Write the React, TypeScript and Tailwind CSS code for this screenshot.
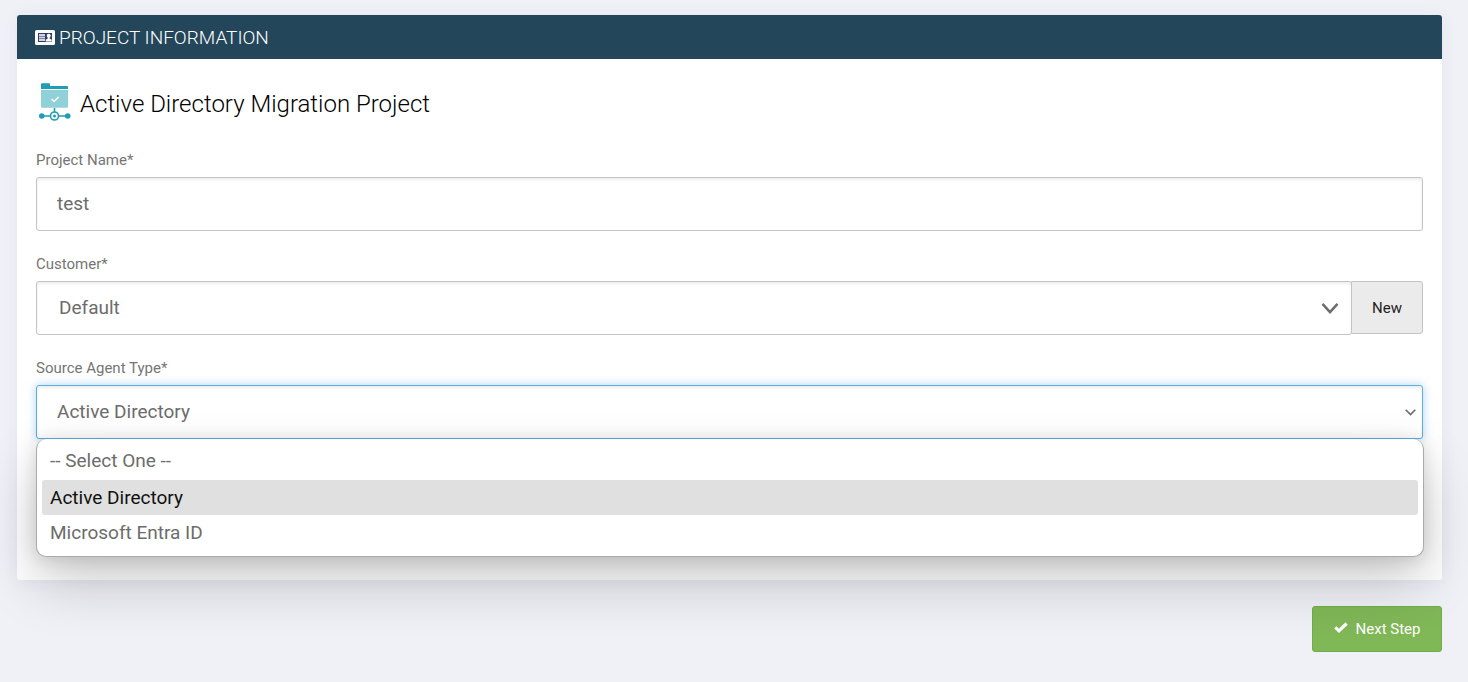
import { useState } from "react";

const agentTypes = ["-- Select One --", "Active Directory", "Microsoft Entra ID"];

const fieldBox =
  "block h-[54px] w-full appearance-none rounded-[3px] border border-[#c4c4c4] bg-white text-[19px] text-[#6c6c6c] shadow-[inset_0_2px_3px_rgba(0,0,0,0.07)] outline-none";

const fieldLabel = "block h-7 pt-px text-[15px] leading-5 text-[#757575]";

function IdCardIcon() {
  return (
    <svg width="20" height="15" viewBox="0 0 20 15" aria-hidden="true">
      <rect width="20" height="15" rx="1.6" fill="#fff" />
      <rect x="3" y="3" width="14" height="9" fill="#2f3f6b" />
      <path d="M4 4h6v2H4zM4 6.500h6v2H4zM4 9h6v2H4z" fill="#d3d5de" />
      <circle cx="13.700" cy="5.800" r="2" fill="#fff" />
      <path d="M12.800 7h1.800v1.600l2.100 1.200V11.500h-6V9.800l2.100-1.200z" fill="#fff" />
    </svg>
  );
}

function MigrationIcon() {
  return (
    <svg width="32" height="38" viewBox="0 0 32 38" aria-hidden="true">
      <path d="M2 6V1.200Q2 .2 3 .2h7.200q.8 0 .8.8v2h17q1 0 1 1v2z" fill="#1f9db2" />
      <path d="M2 7h27v16.500q0 1.200-1.200 1.200H3.200Q2 24.700 2 23.500z" fill="#8fd0d9" />
      <path d="M12.500 16l2.600 2.500 4.600-4.800" fill="none" stroke="#fff" strokeWidth="1.500" />
      <path d="M15.500 25v4M2.500 33H11M20 33h9" stroke="#1f9db2" strokeWidth="1.600" />
      <circle cx="2.800" cy="33" r="2.800" fill="#1f9db2" />
      <circle cx="28.700" cy="33" r="2.800" fill="#1f9db2" />
      <circle cx="15.500" cy="33" r="4" fill="#fff" stroke="#1f9db2" strokeWidth="1.600" />
      <circle cx="15.500" cy="33" r="1.500" fill="#1f9db2" />
    </svg>
  );
}

export default function App() {
  const [name, setName] = useState("test");
  const [agent, setAgent] = useState("Active Directory");

  return (
    <main className="min-h-screen bg-[#f0f1f7] pt-[15px] pr-[26px] pb-7 pl-[17px] font-[Roboto,sans-serif]">
      <section className="rounded-[3px] bg-white shadow-[0_1px_16px_rgba(50,60,110,0.06)]">
        <header className="flex h-11 items-center gap-1 rounded-t-[3px] bg-[#23465a] px-[18px] text-white">
          <IdCardIcon />
          <h1 className="pt-[2px] text-[19px] font-light">PROJECT INFORMATION</h1>
        </header>

        <form className="px-[19px] pt-6 pb-[37px]">
          <div className="flex items-center gap-[9px] pl-[3px]">
            <MigrationIcon />
            <h2 className="pt-1 text-2xl font-light text-black">Active Directory Migration Project</h2>
          </div>

          <div className="mt-7">
            <label htmlFor="project" className={fieldLabel}>Project Name*</label>
            <input id="project" value={name} onChange={(e) => setName(e.target.value)} className={`${fieldBox} px-5 pb-[2px]`} />
          </div>

          <div className="mt-[22px]">
            <label htmlFor="customer" className={fieldLabel}>Customer*</label>
            <div className="flex items-start">
              <div className="relative grow">
                <select id="customer" className={`${fieldBox} px-[22px]`}>
                  <option>Default</option>
                </select>
                <svg className="pointer-events-none absolute top-[21px] right-[13px]" width="18" height="13" viewBox="0 0 18 13" fill="none" stroke="#6c6c6c" strokeWidth="2.500" aria-hidden="true">
                  <path d="M1.500 1.800L9 10.100l7.500-8.300" />
                </svg>
              </div>
              <button type="button" className="-ml-px h-[53px] w-[72px] rounded-r-[3px] border border-[#c4c4c4] bg-[#ebebeb] pt-px text-[15px] text-[#222]">New</button>
            </div>
          </div>

          <div className="mt-[22px]">
            <label htmlFor="agent" className={fieldLabel}>Source Agent Type*</label>
            <div className="relative">
              <select
                id="agent"
                value={agent}
                onChange={(e) => setAgent(e.target.value)}
                className="block h-[54px] w-full appearance-none rounded-[3px] border border-[#5fade6] bg-white px-5 text-[19px] text-[#6c6c6c] shadow-[inset_0_2px_3px_rgba(0,0,0,0.07),0_0_10px_rgba(95,173,230,0.5)] outline-none"
              >
                {agentTypes.map((type) => <option key={type}>{type}</option>)}
              </select>
              <svg className="pointer-events-none absolute top-6 right-[7px]" width="11" height="7" viewBox="0 0 11 7" fill="none" stroke="#6c6c6c" strokeWidth="1.600" aria-hidden="true">
                <path d="M.7.700l4.800 4.900L10.300.700" />
              </svg>
              <ul
                role="listbox"
                aria-label="Source Agent Type"
                className="absolute top-[54px] -right-px left-0 z-10 rounded-[10px] border border-t-0 border-[#aaa] bg-white px-[5px] pt-[5px] pb-[6px] text-[19px] text-[#6c6c6c] shadow-[0_26px_56px_rgba(0,0,0,0.2),0_2px_18px_rgba(0,0,0,0.14)]"
              >
                {agentTypes.map((type) => (
                  <li
                    key={type}
                    role="option"
                    aria-selected={type === agent}
                    onClick={() => setAgent(type)}
                    className="h-[35px] rounded-[3px] px-2 leading-[35px] first:mb-px first:leading-[34px] aria-selected:bg-[#e0e0e0] aria-selected:text-[#111]"
                  >
                    {type}
                  </li>
                ))}
              </ul>
            </div>
          </div>

          <div className="mt-[50px] h-[54px] rounded-[3px] border border-[#c4c4c4]" aria-hidden="true" />
        </form>
      </section>

      <div className="mt-[26px] flex justify-end">
        <button type="button" className="flex h-[46px] w-[130px] items-center justify-center gap-2 rounded-[3px] border border-[#6fae45] bg-[#80b757] text-[15px] text-white">
          <svg className="mb-1" width="14" height="11" viewBox="0 0 14 11" fill="none" stroke="#fff" strokeWidth="3.200" aria-hidden="true">
            <path d="M1.300 5.300l3.700 3.500L12.600 1.500" />
          </svg>
          Next Step
        </button>
      </div>
    </main>
  );
}
